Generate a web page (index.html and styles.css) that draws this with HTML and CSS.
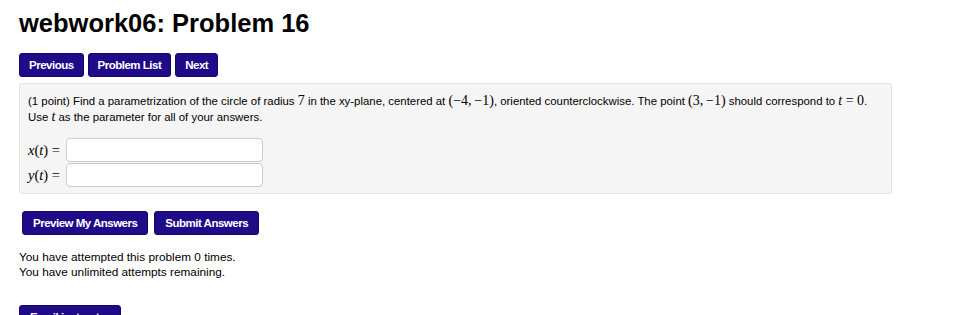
FILE: index.html
```html
<!DOCTYPE html>
<html>
<head>
<meta charset="utf-8">
<link rel="stylesheet" href="styles.css">
</head>
<body>
<div class="page">
  <h1 class="title">webwork06: Problem 16</h1>
  <div class="nav">
    <button class="btn">Previous</button>
    <button class="btn">Problem List</button>
    <button class="btn">Next</button>
  </div>
  <div class="problem">
    <p class="text">(1 point) Find a parametrization of the circle of radius <span class="m">7</span> in the xy-plane, centered at <span class="m">(−4,&thinsp;−1)</span>, oriented counterclockwise. The point <span class="m">(3,&thinsp;−1)</span> should correspond to <span class="m"><i>t</i> = 0</span>.<br>Use <span class="m"><i>t</i></span> as the parameter for all of your answers.</p>
    <div class="answers">
      <div class="row"><span class="lbl m"><i>x</i>(<i>t</i>) =</span><input class="inp" type="text"></div>
      <div class="row"><span class="lbl m"><i>y</i>(<i>t</i>) =</span><input class="inp" type="text"></div>
    </div>
  </div>
  <div class="actions">
    <button class="btn btn-lg">Preview My Answers</button>
    <button class="btn btn-lg">Submit Answers</button>
  </div>
  <div class="attempts">
    <div>You have attempted this problem 0 times.</div>
    <div>You have unlimited attempts remaining.</div>
  </div>
  <div class="email">
    <button class="btn btn-lg">Email instructor</button>
  </div>
</div>
</body>
</html>
```
FILE: styles.css
```css
html, body {
  margin: 0;
  padding: 0;
  background: #fff;
}
.page {
  padding: 0 0 0 19px;
  font-family: "Liberation Sans", Arial, sans-serif;
  color: #000;
  width: 873px;
}
.title {
  margin: 0;
  padding-top: 9px;
  font-size: 25.5px;
  line-height: 28px;
  font-weight: bold;
}
.nav {
  display: flex;
  gap: 4px;
  margin-top: 16px;
}
.btn {
  font-family: "Liberation Sans", Arial, sans-serif;
  font-weight: bold;
  font-size: 11.5px;
  letter-spacing: -0.5px;
  color: #fff;
  background: #1f0a87;
  border: 1px solid #14066a;
  border-radius: 3px;
  height: 24px;
  padding: 0 9px;
  margin: 0;
}
.btn-lg {
  padding: 0 10px;
}
.problem {
  margin-top: 6px;
  background: #f5f5f5;
  border: 1px solid #e3e3e3;
  border-radius: 3px;
  padding: 9px 8px 8px 8px;
  box-sizing: border-box;
  height: 111px;
}
.text {
  margin: 0;
  font-size: 11.4px;
  line-height: 16px;
}
.m {
  font-family: "Liberation Serif", "Times New Roman", serif;
  font-size: 14px;
}
.answers {
  margin-top: 13px;
  display: flex;
  flex-direction: column;
  gap: 1px;
}
.row {
  display: flex;
  align-items: center;
  gap: 5px;
}
.lbl {
  width: 33px;
  font-size: 14.5px;
}
.inp {
  width: 197px;
  height: 24px;
  box-sizing: border-box;
  border: 1px solid #ccc;
  border-radius: 4px;
  background: #fff;
  margin: 0;
}
.actions {
  display: flex;
  gap: 6px;
  margin-top: 17px;
  padding-left: 3px;
}
.attempts {
  margin-top: 15px;
  font-size: 11.8px;
  line-height: 15px;
}
.email {
  margin-top: 25px;
}
```
